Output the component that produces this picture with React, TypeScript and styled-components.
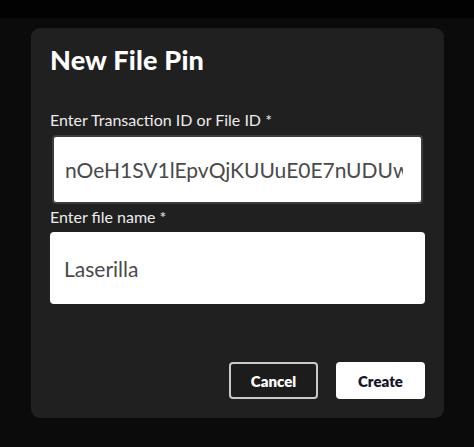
import styled, { createGlobalStyle } from 'styled-components';

const GlobalStyle = createGlobalStyle`
  html, body {
    margin: 0;
    padding: 0;
    background: #0b0b0b;
    font-family: Lato, "Open Sans", sans-serif;
  }
`;

const Screen = styled.div`
  width: 474px;
  height: 447px;
  background: linear-gradient(#020202 0 18px, #0b0b0b 18px);
  padding-top: 28px;
  box-sizing: border-box;
`;

const Panel = styled.div`
  margin-left: 31px;
  width: 413px;
  height: 390px;
  box-sizing: border-box;
  background: #202020;
  border-radius: 9px;
  padding: 15px 19px 19px;
  display: flex;
  flex-direction: column;
`;

const Title = styled.h2`
  margin: 0;
  font-size: 27px;
  line-height: 34px;
  font-weight: 900;
  color: #ffffff;
  letter-spacing: 0.2px;
`;

const Field = styled.label<{ $top: number }>`
  display: flex;
  flex-direction: column;
  margin-top: ${(p) => p.$top}px;
`;

const LabelText = styled.span`
  font-size: 16px;
  line-height: 20px;
  color: #ececec;
  margin-bottom: 5px;
`;

const Input = styled.input<{ $outlined?: boolean }>`
  box-sizing: border-box;
  height: ${(p) => (p.$outlined ? 69 : 72)}px;
  margin: 0 ${(p) => (p.$outlined ? 2 : 0)}px;
  border: ${(p) => (p.$outlined ? '2px solid #3d3d3d' : 'none')};
  border-radius: 4px;
  background: #ffffff;
  padding: 0 18px 0 ${(p) => (p.$outlined ? 11 : 14)}px;
  font-family: Lato, "Open Sans", sans-serif;
  font-size: 21px;
  font-weight: 400;
  color: #4a4a4a;
  outline: none;
`;

const Actions = styled.div`
  margin-top: auto;
  display: flex;
  justify-content: flex-end;
  gap: 18px;
`;

const Button = styled.button<{ $primary?: boolean }>`
  width: 89px;
  height: 37px;
  border-radius: 4px;
  box-sizing: border-box;
  font-family: Lato, "Open Sans", sans-serif;
  font-size: 15px;
  font-weight: 800;
  cursor: pointer;
  background: ${(p) => (p.$primary ? '#ffffff' : '#1c1c1c')};
  color: ${(p) => (p.$primary ? '#15152b' : '#ffffff')};
  border: ${(p) => (p.$primary ? 'none' : '2px solid #c9c9c9')};
`;

export default function App() {
  return (
    <>
      <GlobalStyle />
      <Screen>
        <Panel>
          <Title>New File Pin</Title>
          <Field $top={33}>
            <LabelText>Enter Transaction ID or File ID *</LabelText>
            <Input $outlined readOnly value="nOeH1SV1lEpvQjKUUuE0E7nUDUwXq3Tb" />
          </Field>
          <Field $top={3}>
            <LabelText>Enter file name *</LabelText>
            <Input readOnly value="Laserilla" />
          </Field>
          <Actions>
            <Button>Cancel</Button>
            <Button $primary>Create</Button>
          </Actions>
        </Panel>
      </Screen>
    </>
  );
}
